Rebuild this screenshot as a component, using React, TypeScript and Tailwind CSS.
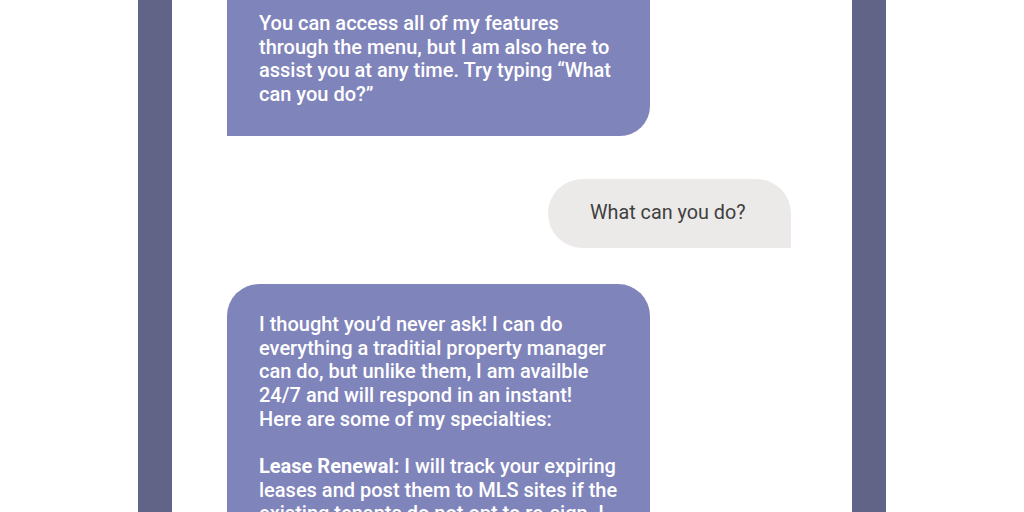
const font = { fontFamily: "Roboto, 'Noto Sans', sans-serif" };

function BotBubble({ children, className }: { children: React.ReactNode; className?: string }) {
  return (
    <div
      className={`w-[423px] shrink-0 bg-[#7f84bb] pl-8 pr-[30px] text-[20px] leading-[23.7px] font-medium text-white ${className ?? ""}`}
    >
      {children}
    </div>
  );
}

export default function App() {
  return (
    <main className="flex h-[512px] w-full justify-center overflow-hidden bg-white" style={font}>
      <div className="flex w-[748px] border-x-[34px] border-x-[#626487] bg-white">
        <div className="flex w-full flex-col">
          <BotBubble className="ml-[55px] mt-[-18px] rounded-br-[30px] pt-[30px] pb-[29px]">
            You can access all of my features through the menu, but I am also here to assist you at
            any time. Try typing “What can you do?”
          </BotBubble>

          <div className="mr-[61px] mt-[43px] flex h-[69px] w-[243px] shrink-0 items-center self-end rounded-l-[35px] rounded-tr-[35px] bg-[#ebeae9] pl-[42px] text-[19.8px] text-[#3f3f3f]">
            What can you do?
          </div>

          <BotBubble className="ml-[55px] mt-[36px] rounded-t-[32px] pt-[29px] pb-10">
            I thought you’d never ask! I can do everything a traditial property manager can do, but
            unlike them, I am availble 24/7 and will respond in an instant!
            <br />
            Here are some of my specialties:
            <br />
            <br />
            <span className="font-bold">Lease Renewal:</span> I will track your expiring leases and
            post them to MLS sites if the existing tenants do not opt to re-sign. I will also handle
            showings and screening.
          </BotBubble>
        </div>
      </div>
    </main>
  );
}
